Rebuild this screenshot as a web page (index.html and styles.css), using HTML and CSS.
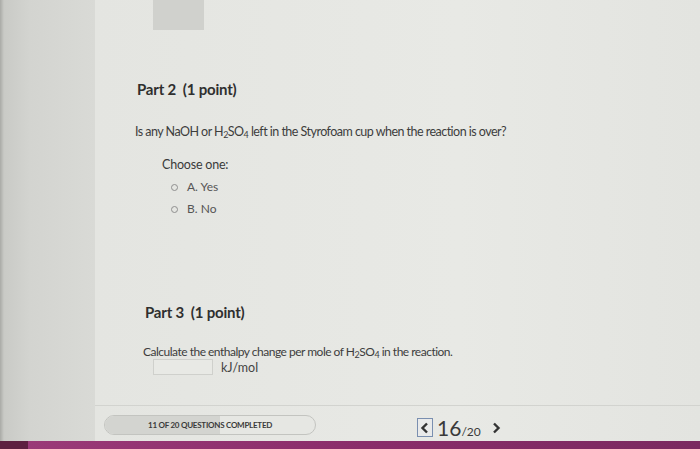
FILE: index.html
```html
<!DOCTYPE html>
<html>
<head>
<meta charset="utf-8">
<link rel="stylesheet" href="styles.css">
</head>
<body>
<div class="screen">
  <div class="top">
    <div class="side"></div>
    <div class="main">
      <div class="content">
        <div class="tab"></div>
        <h2 class="part part2">Part 2&nbsp;&nbsp;(1 point)</h2>
        <p class="question q2">Is any NaOH or H<sub>2</sub>SO<sub>4</sub> left in the Styrofoam cup when the reaction is over?</p>
        <div class="choices">
          <p class="choose">Choose one:</p>
          <label class="option"><span class="radio"></span>A. Yes</label>
          <label class="option"><span class="radio"></span>B. No</label>
        </div>
        <h2 class="part part3">Part 3&nbsp;&nbsp;(1 point)</h2>
        <p class="question q3">Calculate the enthalpy change per mole of H<sub>2</sub>SO<sub>4</sub> in the reaction.</p>
        <div class="answer">
          <span class="box"></span>
          <span class="unit">kJ/mol</span>
        </div>
      </div>
      <div class="footer">
        <div class="progress"><span class="fill"></span><span class="ptext">11 OF 20 QUESTIONS COMPLETED</span></div>
        <div class="nav">
          <span class="prev"><svg width="10" height="12" viewBox="0 0 10 12"><path d="M7 1.5 L2.5 6 L7 10.5" fill="none" stroke="#333" stroke-width="2.4"/></svg></span>
          <span class="num">16</span><span class="den">/20</span>
          <span class="next"><svg width="10" height="12" viewBox="0 0 10 12"><path d="M3 1.5 L7.5 6 L3 10.5" fill="none" stroke="#333" stroke-width="2.4"/></svg></span>
        </div>
      </div>
    </div>
  </div>
  <div class="taskbar"><span class="start"></span><span class="bar"></span></div>
</div>
</body>
</html>
```
FILE: styles.css
```css
html, body {
  margin: 0;
  padding: 0;
}
body {
  font-family: Lato, "Liberation Sans", sans-serif;
  color: #3b3b3b;
  background: #e2e3df;
}
.screen {
  width: 700px;
  height: 449px;
  display: flex;
  flex-direction: column;
  overflow: hidden;
}
.top {
  flex: 1;
  display: flex;
}
.side {
  width: 95px;
  background: linear-gradient(to right, #a9aaa6 0, #c9cac6 4px, #d3d4d0 30px, #d9dad6 95px);
}
.main {
  flex: 1;
  display: flex;
  flex-direction: column;
  background: linear-gradient(to right, #e4e5e1, #e8e9e5 60%, #e3e4e0);
}
.content {
  flex: 1;
}
.tab {
  width: 51px;
  height: 30px;
  margin-left: 58px;
  background: #d0d1cd;
}
.part {
  margin: 50px 0 0 42px;
  font-size: 15px;
  line-height: 18px;
  font-weight: 700;
  color: #2f2f2f;
  letter-spacing: -0.2px;
}
.question {
  margin: 26px 0 0 40px;
  font-size: 12.5px;
  line-height: 16px;
  color: #3d3d3d;
  letter-spacing: -0.53px;
}
sub {
  font-size: 9px;
  vertical-align: -2px;
  line-height: 0;
}
.choices {
  margin: 17px 0 0 67px;
  display: flex;
  flex-direction: column;
  gap: 6px;
}
.choose {
  margin: 0;
  font-size: 12.5px;
  line-height: 16px;
  color: #3a3a3a;
  letter-spacing: -0.2px;
}
.option {
  display: flex;
  align-items: center;
  margin-left: 9px;
  font-size: 12px;
  line-height: 16px;
  color: #555;
}
.radio {
  width: 5px;
  height: 5px;
  border: 1px solid #8f8f8f;
  border-radius: 50%;
  margin-right: 9px;
}
.part3 {
  margin: 86px 0 0 50px;
}
.q3 {
  margin: 24px 0 0 48px;
  line-height: 14px;
  font-size: 12px;
  letter-spacing: -0.5px;
}
.answer {
  display: flex;
  align-items: center;
  margin: 0 0 0 58px;
  height: 16px;
}
.box {
  width: 58px;
  height: 14px;
  border: 1px solid #cfd0cc;
  background: #e8e9e5;
}
.unit {
  margin-left: 8px;
  font-size: 12.5px;
  color: #444;
}
.footer {
  height: 35px;
  border-top: 1px solid #d2d3cf;
  display: flex;
  align-items: center;
  padding-left: 9px;
}
.progress {
  position: relative;
  width: 210px;
  height: 18px;
  border: 1px solid #c3c4c0;
  border-radius: 10px;
  background: #e6e7e3;
  display: flex;
  align-items: center;
  margin-top: 2px;
  overflow: hidden;
}
.fill {
  position: absolute;
  left: 0;
  top: 0;
  bottom: 0;
  width: 115px;
  background: #d3d4d0;
}
.ptext {
  position: relative;
  margin-left: 43px;
  font-size: 8px;
  font-weight: 700;
  color: #3a3a3a;
  letter-spacing: -0.25px;
}
.nav {
  display: flex;
  align-items: center;
  margin-left: 101px;
  margin-top: 8px;
}
.prev {
  width: 14px;
  height: 17px;
  border: 1px solid #7a8fb0;
  display: flex;
  align-items: center;
  justify-content: center;
  background: #e9eaea;
}
.num {
  margin-left: 4px;
  font-size: 21px;
  line-height: 22px;
  color: #3a3a3a;
}
.den {
  font-size: 12px;
  margin-top: 7px;
  color: #3a3a3a;
}
.next {
  margin-left: 10px;
  display: flex;
  align-items: center;
}
.taskbar {
  height: 8px;
  display: flex;
  background: #8c2f6c;
}
.start {
  width: 28px;
  background: #5d2040;
}
.bar {
  flex: 1;
  background: linear-gradient(to right, #9a3a78, #8a2d6a 50%, #7a2a60);
}
```
